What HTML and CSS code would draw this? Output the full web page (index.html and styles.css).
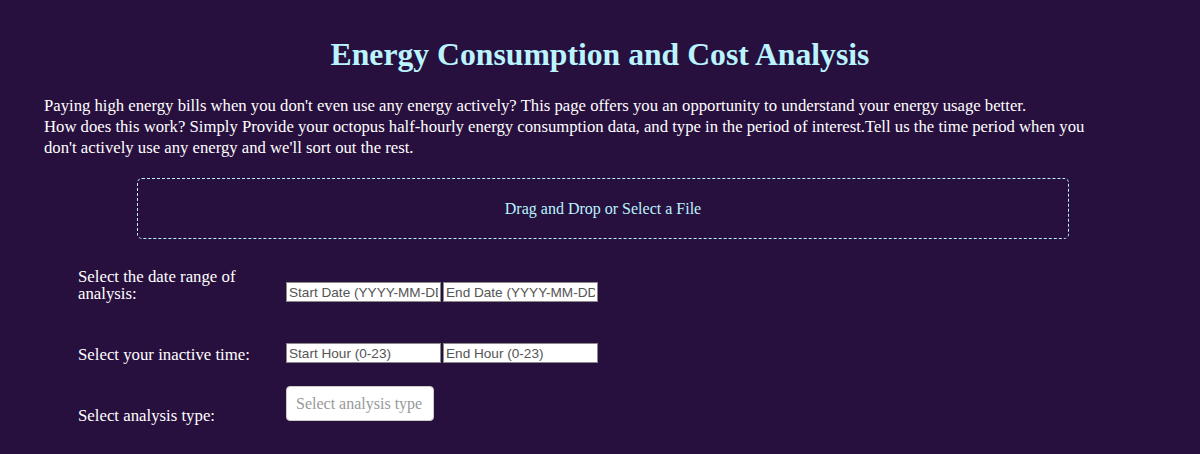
FILE: index.html
```html
<!DOCTYPE html>
<html lang="en">
<head>
  <meta charset="UTF-8" />
  <meta name="viewport" content="width=device-width, initial-scale=1.0"/>
  <title>Energy Consumption and Cost Analysis</title>
  <link rel="stylesheet" href="styles.css">
</head>
<body>
<div class="container">
  <h1 class="title">Energy Consumption and Cost Analysis</h1>

  <p class="intro">
    Paying high energy bills when you don't even use any energy actively? This page offers you an opportunity to understand your energy usage better.<br/>
    How does this work? Simply Provide your octopus half-hourly energy consumption data, and type in the period of interest.Tell us the time period when you don't actively use any energy and we'll sort out the rest.
  </p>

  <div class="upload">Drag and Drop or Select a File</div>

  <div class="form">
    <div class="row">
      <label class="lbl">Select the date range of analysis:</label>
      <div class="pair">
        <input type="text" placeholder="Start Date (YYYY-MM-DD)">
        <input type="text" placeholder="End Date (YYYY-MM-DD)">
      </div>
    </div>
    <div class="row">
      <label class="lbl">Select your inactive time:</label>
      <div class="pair">
        <input type="text" placeholder="Start Hour (0-23)">
        <input type="text" placeholder="End Hour (0-23)">
      </div>
    </div>
    <div class="row">
      <label class="lbl">Select analysis type:</label>
      <div class="dropdown">Select analysis type</div>
    </div>
  </div>
</div>
</body>
</html>
```

FILE: styles.css
```css
body{
  margin:0;
  font-family:"Liberation Serif","Times New Roman",serif;
  background:#28103e;
  color:#fff;
  min-height:100vh;
}
.container{padding:13px 100px 20px 44px}
.title{
  margin:24px -56px 22px 0;
  text-align:center;
  font-size:31.7px;
  font-weight:bold;
  color:#b9f4ff;
}
.intro{margin:0 0 20px;font-size:16.7px;line-height:21px}
.upload{
  width:930px;
  height:59px;
  margin:0 0 0 93px;
  border:1px dashed #b9f4ff;
  border-radius:5px;
  display:flex;
  align-items:center;
  justify-content:center;
  font-size:16px;
  color:#b9f4ff;
}
.form{display:flex;flex-direction:column;gap:23px;margin:25px 0 0 34px}
.row{display:flex;align-items:flex-end;min-height:38px}
.lbl{width:208px;font-size:16.8px;line-height:17px;padding-right:30px;box-sizing:border-box}
.pair{display:flex;gap:2px}
.pair input{
  width:155px;
  height:20px;
  box-sizing:border-box;
  margin:0;
  padding:1px 2px;
  border:1px solid #8a8a8a;
  font-family:"Liberation Sans",Arial,sans-serif;
  font-size:13.6px;
  color:#222;
  background:#fff;
}
.pair input::placeholder{color:#555}
.dropdown{
  width:148px;
  height:35px;
  box-sizing:border-box;
  margin-bottom:3px;
  padding:0 9px;
  display:flex;
  align-items:center;
  white-space:nowrap;
  overflow:hidden;
  background:#fff;
  border:1px solid #ccc;
  border-radius:4px;
  font-size:16px;
  color:#999;
}
```
